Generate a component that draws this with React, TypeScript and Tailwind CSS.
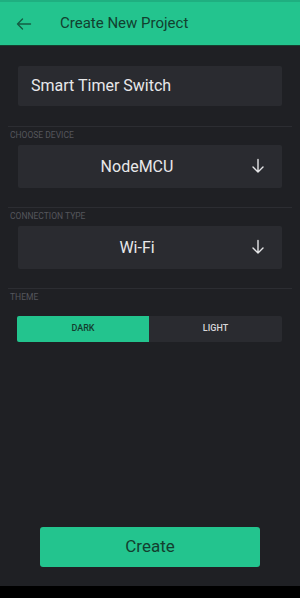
import React from 'react';

const font = { fontFamily: '"Roboto", "Noto Sans", sans-serif' };

const ArrowDown = () => (
  <svg width="14" height="16" viewBox="0 0 14 16" fill="none" stroke="#e5e5e7" strokeWidth="1.4" strokeLinecap="round" strokeLinejoin="round">
    <path d="M7 1.5v12.5M2 9l5 5 5-5" />
  </svg>
);

const Section = ({ label, gap, children }: { label: string; gap: string; children: React.ReactNode }) => (
  <div className="flex flex-col">
    <div className="mx-2 h-px bg-[#2c2d32]" />
    <div className="px-[10px] pt-[3px] text-[8.5px] leading-[10px] uppercase text-[#55565c]">{label}</div>
    <div className={`px-[18px] ${gap}`}>{children}</div>
  </div>
);

const Select = ({ value }: { value: string }) => (
  <div className="relative flex h-[43px] items-center justify-center rounded-[2px] bg-[#2a2b30] pr-[26px] text-[16px] text-[#e8e8ea]">
    {value}
    <span className="absolute right-[17px] top-[13px]">
      <ArrowDown />
    </span>
  </div>
);

export default function App() {
  return (
    <div className="flex h-[598px] w-[300px] flex-col bg-[#1f2024]" style={font}>
      <div className="h-[2px] bg-[#1faf80]" />
      <div className="flex h-[44px] items-center bg-[#23c48e] border-b border-[#15402f]">
        <svg className="ml-[16px]" width="16" height="12" viewBox="0 0 16 12" fill="none" stroke="#155c43" strokeWidth="1.4" strokeLinecap="round" strokeLinejoin="round">
          <path d="M14.5 6H1.5M6.5 1L1.5 6l5 5" />
        </svg>
        <span className="ml-[28px] text-[15px] text-[#12402f]">Create New Project</span>
      </div>

      <div className="px-[18px] pt-[20px] pb-[20px]">
        <div className="flex h-[40px] items-center rounded-[2px] bg-[#2a2b30] px-[13px] text-[16px] text-[#e8e8ea]">
          Smart Timer Switch
        </div>
      </div>

      <Section label="Choose device" gap="pt-[5px]">
        <Select value="NodeMCU" />
      </Section>

      <div className="h-[19px]" />
      <Section label="Connection type" gap="pt-[5px]">
        <Select value="Wi-Fi" />
      </Section>

      <div className="h-[19px]" />
      <Section label="Theme" gap="pt-[14px]">
        <div className="flex h-[26px] text-[9px] font-medium uppercase">
          <div className="-ml-px flex w-[132px] items-center justify-center rounded-l-[2px] bg-[#23c48e] text-[#143d2e]">
            Dark
          </div>
          <div className="flex flex-1 items-center justify-center rounded-r-[2px] bg-[#2a2b30] text-[#d8d8da]">
            Light
          </div>
        </div>
      </Section>

      <div className="flex-1" />
      <div className="flex justify-center pb-[19px]">
        <button className="flex h-[40px] w-[220px] items-center justify-center rounded-[3px] bg-[#23c48e] text-[17px] text-[#133e2e]">
          Create
        </button>
      </div>
      <div className="h-[12px] bg-black" />
    </div>
  );
}
